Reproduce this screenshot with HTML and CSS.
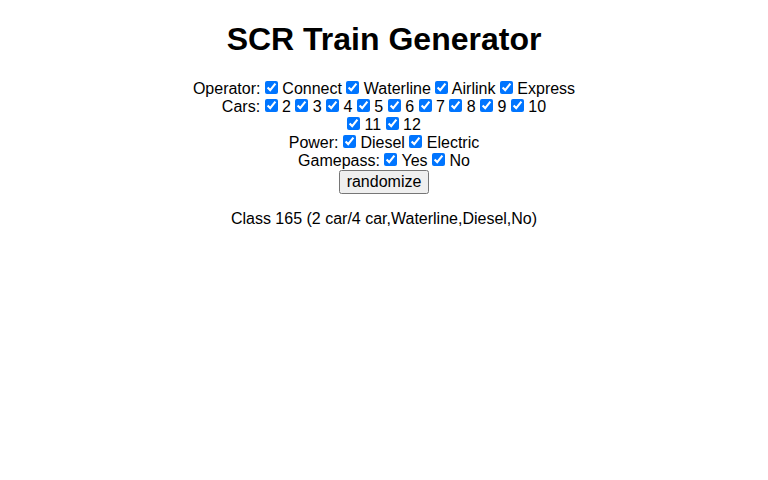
FILE: index.html
```html
<!DOCTYPE html>
<html>
<head>
<meta charset="utf-8">
<title>SCR Train Generator</title>
<link rel="stylesheet" href="styles.css">
</head>
<body class="page">
<h1 class="title">SCR Train Generator</h1>
<div class="options">
Operator: <input class="check" type="checkbox" checked> Connect <input class="check" type="checkbox" checked> Waterline <input class="check" type="checkbox" checked> Airlink <input class="check" type="checkbox" checked> Express<br>
Cars: <input class="check" type="checkbox" checked> 2 <input class="check" type="checkbox" checked> 3 <input class="check" type="checkbox" checked> 4 <input class="check" type="checkbox" checked> 5 <input class="check" type="checkbox" checked> 6 <input class="check" type="checkbox" checked> 7 <input class="check" type="checkbox" checked> 8 <input class="check" type="checkbox" checked> 9 <input class="check" type="checkbox" checked> 10<br>
<input class="check" type="checkbox" checked> 11 <input class="check" type="checkbox" checked> 12<br>
Power: <input class="check" type="checkbox" checked> Diesel <input class="check" type="checkbox" checked> Electric<br>
Gamepass: <input class="check" type="checkbox" checked> Yes <input class="check" type="checkbox" checked> No<br>
<button class="randomize" type="button">randomize</button>
</div>
<p class="result">Class 165 (2 car/4 car,Waterline,Diesel,No)</p>
</body>
</html>
```
FILE: styles.css
```css
html {
  margin: 0;
  padding: 0;
}
.page {
  margin: 0;
  padding: 0 8px;
  font-family: "Liberation Sans", Arial, sans-serif;
  font-size: 16px;
  text-align: center;
  color: #000;
  background: #fff;
}
.title {
  font-size: 32px;
  font-weight: bold;
  margin: 21.44px 0;
}
.check {
  margin: 0;
}
.randomize {
  font-family: "Liberation Sans", Arial, sans-serif;
  font-size: 16px;
}
.result {
  margin: 16px 0;
}
```
